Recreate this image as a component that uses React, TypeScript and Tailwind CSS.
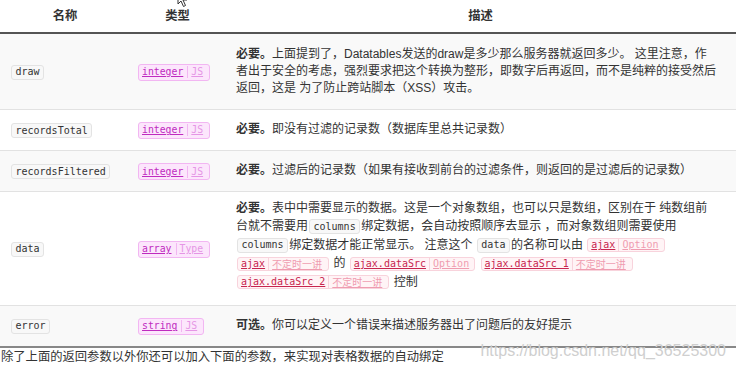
import React from "react";

type Seg = { name: string; kind: string; kindCjk?: boolean };

const Code = ({ children }: { children: React.ReactNode }) => (
  <code className="mx-[1px] inline-block rounded-[3px] border border-[#e3e3e3] bg-[#f8f8f8] px-[3.5px] py-[0.5px] align-middle font-['DejaVu_Sans_Mono',monospace] text-[10px] leading-[12px] text-[#333]">
    {children}
  </code>
);

const TypeTag = ({ name, kind }: Seg) => (
  <span className="inline-flex rounded-[3px] border border-[#f2b6f2] bg-[#fce6fc] py-[1.5px] font-['DejaVu_Sans_Mono',monospace] text-[9.8px] leading-[12px]">
    <span className="pl-[3px] pr-[4px] text-[#bf2bbf] underline">{name}</span>
    <span className="border-l border-[#f2b6f2] pl-[3px] pr-[6px] text-[#e596e5] underline">
      {kind}
    </span>
  </span>
);

const OptTag = ({ name, kind, kindCjk }: Seg) => (
  <span className="mx-[1px] inline-flex rounded-[3px] border border-[#f8d3dc] bg-[#fff4f6] align-middle font-['DejaVu_Sans_Mono',monospace] text-[10px] leading-[12px]">
    <span className="pl-[3px] pr-[3px] text-[#c7254e] underline">{name}</span>
    <span
      className={
        kindCjk
          ? "border-l border-[#f8d3dc] pl-[3px] pr-[6px] font-['Noto_Sans_CJK_SC',sans-serif] text-[#ef9cb0] underline"
          : "border-l border-[#f8d3dc] pl-[3px] pr-[5px] text-[#ef9cb0] underline"
      }
    >
      {kind}
    </span>
  </span>
);

const rows = [
  {
    name: "draw",
    type: { name: "integer", kind: "JS" },
    desc: (
      <>
        <b>必要。</b>上面提到了，Datatables发送的draw是多少那么服务器就返回多少。
        这里注意，作者出于安全的考虑，强烈要求把这个转换为整形，即数字后再返回，而不是纯粹的接受然后返回，这是
        为了防止跨站脚本（XSS）攻击。
      </>
    ),
  },
  {
    name: "recordsTotal",
    type: { name: "integer", kind: "JS" },
    desc: (
      <>
        <b>必要。</b>即没有过滤的记录数（数据库里总共记录数）
      </>
    ),
  },
  {
    name: "recordsFiltered",
    type: { name: "integer", kind: "JS" },
    desc: (
      <>
        <b>必要。</b>过滤后的记录数（如果有接收到前台的过滤条件，则返回的是过滤后的记录数）
      </>
    ),
  },
  {
    name: "data",
    type: { name: "array", kind: "Type" },
    tall: true,
    desc: (
      <>
        <b>必要。</b>表中中需要显示的数据。这是一个对象数组，也可以只是数组，区别在于
        纯数组前台就不需要用<Code>columns</Code>绑定数据，会自动按照顺序去显示
        ，而对象数组则需要使用<Code>columns</Code>绑定数据才能正常显示。 注意这个{" "}
        <Code>data</Code>的名称可以由 <OptTag name="ajax" kind="Option" />{" "}
        <OptTag name="ajax" kind="不定时一讲" kindCjk /> 的{" "}
        <OptTag name="ajax.dataSrc" kind="Option" />{" "}
        <OptTag name="ajax.dataSrc 1" kind="不定时一讲" kindCjk />{" "}
        <OptTag name="ajax.dataSrc 2" kind="不定时一讲" kindCjk /> 控制
      </>
    ),
  },
  {
    name: "error",
    type: { name: "string", kind: "JS" },
    desc: (
      <>
        <b>可选。</b>你可以定义一个错误来描述服务器出了问题后的友好提示
      </>
    ),
  },
];

export default function App() {
  return (
    <div className="relative h-[371px] w-[736px] overflow-hidden bg-white font-['Liberation_Sans','Noto_Sans_CJK_SC',sans-serif] text-[12px] text-[#333]">
      <svg
        className="absolute left-[177px] top-[-10px]"
        width="12"
        height="18"
        viewBox="0 0 12 18"
      >
        <path
          d="M1 1 L1 14 L4 11 L6.5 16.5 L8.5 15.5 L6 10 L10 10 Z"
          fill="#fff"
          stroke="#333"
          strokeWidth="1"
          strokeLinejoin="round"
        />
      </svg>
      <table className="w-full table-fixed border-collapse">
        <colgroup>
          <col className="w-[130px]" />
          <col className="w-[95px]" />
          <col />
        </colgroup>
        <thead>
          <tr className="h-[33px] border-b-2 border-[#555] text-[12.3px]">
            <th className="text-center font-bold">名称</th>
            <th className="text-center font-bold">类型</th>
            <th className="text-center font-bold">描述</th>
          </tr>
        </thead>
        <tbody>
          {rows.map((r, i) => (
            <tr
              key={r.name}
              className={
                i === rows.length - 1
                  ? "border-b-2 border-[#888] bg-[#f9f9f9]"
                  : i % 2 === 0
                    ? "border-b border-[#e2e2e2] bg-[#f9f9f9]"
                    : "border-b border-[#e2e2e2] bg-white"
              }
            >
              <td className="pl-[10px]">
                <Code>{r.name}</Code>
              </td>
              <td className="pl-[8px]">
                <TypeTag name={r.type.name} kind={r.type.kind} />
              </td>
              <td
                className={
                  r.tall
                    ? "pb-[13.5px] pl-[11px] pr-[18.5px] pt-[6.5px] leading-[18.5px]"
                    : "py-[11.5px] pl-[11px] pr-[18.5px] leading-[17.2px]"
                }
              >
                {r.desc}
              </td>
            </tr>
          ))}
        </tbody>
      </table>
      <div className="relative pl-[1px] pt-[1px] text-[12.3px] leading-[17px]">
        除了上面的返回参数以外你还可以加入下面的参数，来实现对表格数据的自动绑定
        <span className="absolute right-[10px] top-[-6px] font-['Liberation_Sans',sans-serif] text-[16px] leading-[18px] text-[#cfcfcf]">
          https://blog.csdn.net/qq_36525300
        </span>
      </div>
    </div>
  );
}
